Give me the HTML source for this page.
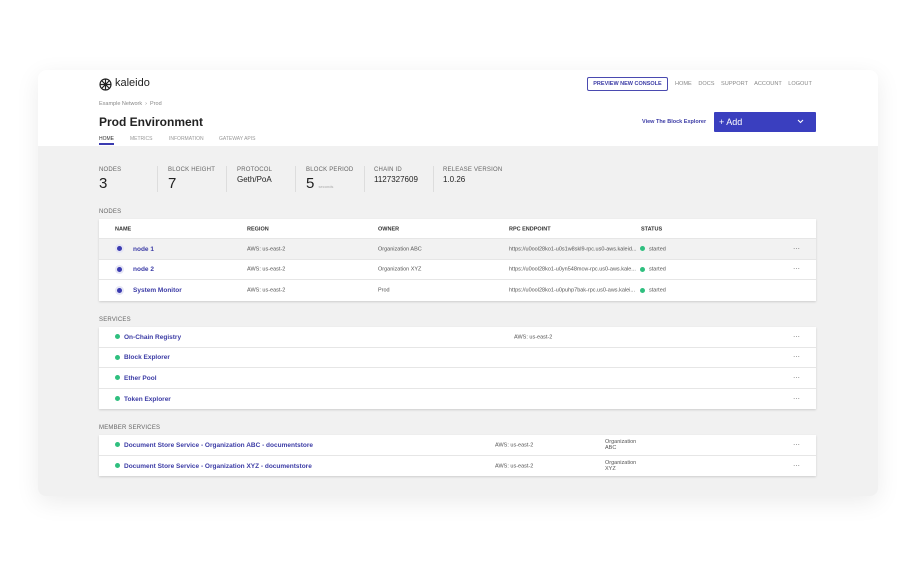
<!DOCTYPE html>
<html><head><style>
*{margin:0;padding:0;box-sizing:border-box}
body{width:915px;height:567px;background:#fff;font-family:"Liberation Sans",sans-serif;position:relative;overflow:hidden;color:#333}
.card{position:absolute;left:38px;top:70px;width:840px;height:426px;background:#f1f1f1;border-radius:8px;box-shadow:0 6px 24px rgba(0,0,0,.08);overflow:hidden}
.hdr{position:absolute;left:0;top:0;width:840px;height:76px;background:#fff}
.a{position:absolute;white-space:nowrap}
.lbl{font-size:6px;color:#666;letter-spacing:.2px}
.big{font-size:15px;color:#222}
.mid{font-size:8px;color:#222}
.sep{position:absolute;width:1px;height:26px;background:#ddd;top:96px}
.tbl{position:absolute;left:61px;width:717px;background:#fff;box-shadow:0 1px 2px rgba(0,0,0,.15)}
.row{position:relative;height:20.5px;border-bottom:1px solid #e6e6e6}
.row:last-child{border-bottom:none}
.t{position:absolute;top:50%;transform:translateY(-40%);white-space:nowrap;font-size:5.5px;color:#555}
.ln{font-size:6.5px;color:#3b3ba5;font-weight:bold}
.th{font-size:5.5px;color:#333;font-weight:bold}
.gd{position:absolute;top:50%;width:5px;height:5px;margin-top:-2.5px;border-radius:50%;background:#2fbf7f}
.pd{position:absolute;top:50%;width:9px;height:9px;margin-top:-4.5px;border-radius:50%;background:#e6e6f5}
.pd:after{content:"";position:absolute;left:2px;top:2px;width:5px;height:5px;border-radius:50%;background:#3b3bb0}
.dots{position:absolute;left:694px;top:50%;transform:translateY(-50%);font-size:7px;color:#555}
</style></head><body>
<div class="card">
<div class="hdr"></div>
<svg class="a" style="left:61px;top:8px" width="13" height="13" viewBox="0 0 13 13"><g fill="none" stroke="#222" stroke-width="1.2"><circle cx="6.5" cy="6.5" r="5.5"/><path d="M3 3l7 7M10 3L3 10M6.5 1v11M1 6.5h11"/></g></svg>
<div class="a" style="left:77px;top:7px;font-size:11px;color:#222">kaleido</div>
<div class="a" style="left:61px;top:31px;font-size:5.5px;color:#888">Example Network &nbsp;›&nbsp; Prod</div>
<div class="a" style="left:61px;top:45px;font-size:12px;font-weight:bold;color:#222">Prod Environment</div>
<div class="a" style="left:61px;top:66px;font-size:5px;color:#333">HOME</div>
<div class="a" style="left:61px;top:73px;width:15px;height:2px;background:#3b3bb0"></div>
<div class="a" style="left:92px;top:66px;font-size:5px;color:#999">METRICS</div>
<div class="a" style="left:131px;top:66px;font-size:5px;color:#999">INFORMATION</div>
<div class="a" style="left:181px;top:66px;font-size:5px;color:#999">GATEWAY APIS</div>
<div class="a" style="left:549px;top:7px;width:81px;height:14px;border:1px solid #4a4ab0;border-radius:2px;font-size:5.5px;font-weight:bold;color:#3b3ba5;text-align:center;line-height:12px">PREVIEW NEW CONSOLE</div>
<div class="a" style="left:637px;top:11px;font-size:5.6px;color:#888;word-spacing:5px">HOME DOCS SUPPORT ACCOUNT LOGOUT</div>
<div class="a" style="left:604px;top:49px;font-size:5.5px;font-weight:bold;color:#3b3ba5">View The Block Explorer</div>
<div class="a" style="left:676px;top:42px;width:102px;height:20px;background:#3a3fbf;border-radius:1px;color:#fff;font-size:9px;line-height:20px;padding-left:5px">+ Add
<svg style="position:absolute;left:83px;top:7px" width="7" height="5" viewBox="0 0 7 5"><path d="M1 1l2.5 2.5L6 1" fill="none" stroke="#fff" stroke-width="1.1"/></svg></div>

<div class="a lbl" style="left:61px;top:97px">NODES</div><div class="a big" style="left:61px;top:105px">3</div>
<div class="sep" style="left:119px"></div>
<div class="a lbl" style="left:130px;top:97px">BLOCK HEIGHT</div><div class="a big" style="left:130px;top:105px">7</div>
<div class="sep" style="left:188px"></div>
<div class="a lbl" style="left:199px;top:97px">PROTOCOL</div><div class="a mid" style="left:199px;top:105px">Geth/PoA</div>
<div class="sep" style="left:257px"></div>
<div class="a lbl" style="left:268px;top:97px">BLOCK PERIOD</div><div class="a big" style="left:268px;top:105px">5 <span style="font-size:4px;color:#aaa">seconds</span></div>
<div class="sep" style="left:326px"></div>
<div class="a lbl" style="left:336px;top:97px">CHAIN ID</div><div class="a mid" style="left:336px;top:105px">1127327609</div>
<div class="sep" style="left:395px"></div>
<div class="a lbl" style="left:405px;top:97px">RELEASE VERSION</div><div class="a mid" style="left:405px;top:105px">1.0.26</div>

<div class="a lbl" style="left:61px;top:139px">NODES</div>
<div class="tbl" style="top:149px">
<div class="row" style="height:20px"><span class="t th" style="left:16px">NAME</span><span class="t th" style="left:148px">REGION</span><span class="t th" style="left:279px">OWNER</span><span class="t th" style="left:410px">RPC ENDPOINT</span><span class="t th" style="left:542px">STATUS</span></div>
<div class="row" style="background:#f2f2f2"><span class="pd" style="left:16px"></span><span class="t ln" style="left:34px">node 1</span><span class="t" style="left:148px">AWS: us-east-2</span><span class="t" style="left:279px">Organization ABC</span><span class="t" style="left:410px">https://u0ool28ko1-u0s1w8skl9-rpc.us0-aws.kaleid...</span><span class="gd" style="left:541px"></span><span class="t" style="left:550px">started</span><span class="dots">···</span></div>
<div class="row"><span class="pd" style="left:16px"></span><span class="t ln" style="left:34px">node 2</span><span class="t" style="left:148px">AWS: us-east-2</span><span class="t" style="left:279px">Organization XYZ</span><span class="t" style="left:410px">https://u0ool28ko1-u0yn548mcw-rpc.us0-aws.kale...</span><span class="gd" style="left:541px"></span><span class="t" style="left:550px">started</span><span class="dots">···</span></div>
<div class="row"><span class="pd" style="left:16px"></span><span class="t ln" style="left:34px">System Monitor</span><span class="t" style="left:148px">AWS: us-east-2</span><span class="t" style="left:279px">Prod</span><span class="t" style="left:410px">https://u0ool28ko1-u0puhp7bak-rpc.us0-aws.kalei...</span><span class="gd" style="left:541px"></span><span class="t" style="left:550px">started</span></div>
</div>

<div class="a lbl" style="left:61px;top:247px">SERVICES</div>
<div class="tbl" style="top:257px">
<div class="row"><span class="gd" style="left:16px"></span><span class="t ln" style="left:25px">On-Chain Registry</span><span class="t" style="left:415px">AWS: us-east-2</span><span class="dots">···</span></div>
<div class="row"><span class="gd" style="left:16px"></span><span class="t ln" style="left:25px">Block Explorer</span><span class="dots">···</span></div>
<div class="row"><span class="gd" style="left:16px"></span><span class="t ln" style="left:25px">Ether Pool</span><span class="dots">···</span></div>
<div class="row"><span class="gd" style="left:16px"></span><span class="t ln" style="left:25px">Token Explorer</span><span class="dots">···</span></div>
</div>

<div class="a lbl" style="left:61px;top:355px">MEMBER SERVICES</div>
<div class="tbl" style="top:365px">
<div class="row"><span class="gd" style="left:16px"></span><span class="t ln" style="left:25px">Document Store Service - Organization ABC - documentstore</span><span class="t" style="left:396px">AWS: us-east-2</span><span class="t" style="left:506px;line-height:6px;transform:translateY(-50%)">Organization<br>ABC</span><span class="dots">···</span></div>
<div class="row"><span class="gd" style="left:16px"></span><span class="t ln" style="left:25px">Document Store Service - Organization XYZ - documentstore</span><span class="t" style="left:396px">AWS: us-east-2</span><span class="t" style="left:506px;line-height:6px;transform:translateY(-50%)">Organization<br>XYZ</span><span class="dots">···</span></div>
</div>
</div>
</body></html>
